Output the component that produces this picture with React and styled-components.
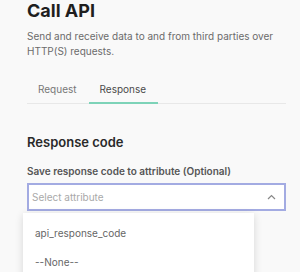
import React from "react";
import styled, { createGlobalStyle } from "styled-components";

const Global = createGlobalStyle`
  html, body { margin: 0; padding: 0; background: #f9f9f9; }
  body { font-family: Inter, "Noto Sans", sans-serif; -webkit-font-smoothing: antialiased; }
`;

const Page = styled.div`
  padding: 0 14px 0 27px;
  height: 272px;
  overflow: hidden;
`;

const Title = styled.h1`
  margin: 0;
  font-size: 18px;
  line-height: 22px;
  font-weight: 700;
  color: #1f1f1f;
`;

const Description = styled.p`
  margin: 7px 0 0;
  font-size: 10px;
  line-height: 15px;
  color: #6b6b6b;
  width: 250px;
`;

const TabRow = styled.div`
  display: flex;
  margin-top: 15px;
  border-bottom: 1px solid #e8e8e8;
`;

const Tab = styled.div`
  padding: 8px 12px 6px 11px;
  font-size: 10px;
  line-height: 14px;
  color: ${(p) => (p.$active ? "#4a4a4a" : "#777")};
  border-bottom: 2px solid ${(p) => (p.$active ? "#7dd3b8" : "transparent")};
  margin-bottom: -1px;
`;

const SectionTitle = styled.h2`
  margin: 30px 0 0;
  font-size: 13px;
  line-height: 16px;
  font-weight: 600;
  color: #2a2a2a;
`;

const Label = styled.div`
  margin-top: 15px;
  font-size: 10px;
  line-height: 13px;
  font-weight: 600;
  color: #555;
`;

const SelectWrap = styled.div`
  position: relative;
  margin-top: 5px;
`;

const SelectBox = styled.div`
  box-sizing: border-box;
  height: 28px;
  border: 2px solid #a3abe2;
  background: #fff;
  display: flex;
  align-items: center;
  justify-content: space-between;
  padding: 0 8px 0 3px;
`;

const Placeholder = styled.span`
  font-size: 10px;
  color: #a9a9a9;
`;

const Menu = styled.div`
  position: absolute;
  left: -4px;
  top: 30px;
  width: 231px;
  background: #fff;
  box-shadow: 0 2px 8px rgba(0, 0, 0, 0.14);
  padding-top: 5px;
  height: 80px;
`;

const Item = styled.div`
  height: 29px;
  display: flex;
  align-items: center;
  padding-left: 12px;
  font-size: 10px;
  color: #666;
`;

export default function App() {
  return (
    <>
      <Global />
      <Page>
        <Title>Call API</Title>
        <Description>
          Send and receive data to and from third parties over HTTP(S) requests.
        </Description>
        <TabRow>
          <Tab>Request</Tab>
          <Tab $active>Response</Tab>
        </TabRow>
        <SectionTitle>Response code</SectionTitle>
        <Label>Save response code to attribute (Optional)</Label>
        <SelectWrap>
          <SelectBox>
            <Placeholder>Select attribute</Placeholder>
            <svg width="9" height="6" viewBox="0 0 9 6">
              <path d="M1 5 L4.5 1.5 L8 5" fill="none" stroke="#888" strokeWidth="1.2" />
            </svg>
          </SelectBox>
          <Menu>
            <Item>api_response_code</Item>
            <Item>--None--</Item>
          </Menu>
        </SelectWrap>
      </Page>
    </>
  );
}
